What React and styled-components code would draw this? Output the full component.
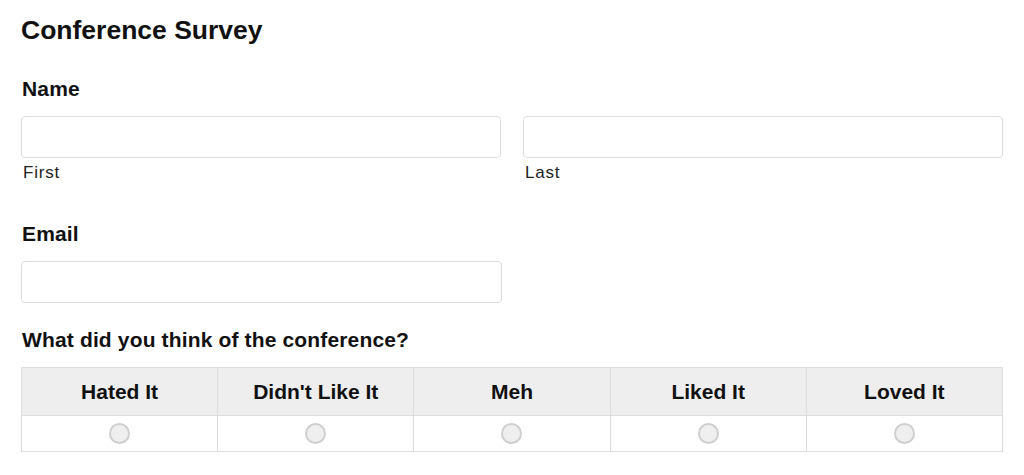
import React from "react";
import styled, { createGlobalStyle } from "styled-components";

const Global = createGlobalStyle`
  html, body { margin: 0; padding: 0; background: #fff; }
  body { font-family: "Liberation Sans", Arial, sans-serif; color: #111; }
  * { box-sizing: border-box; }
`;

const Page = styled.form`
  padding: 14px 21px 20px 21px;
  display: flex;
  flex-direction: column;
`;

const Title = styled.h1`
  margin: 0;
  font-size: 26.5px;
  font-weight: bold;
  line-height: 32px;
  color: #111;
`;

const Section = styled.div`
  margin-top: ${(p) => p.$top}px;
  display: flex;
  flex-direction: column;
`;

const Label = styled.div`
  font-size: 21px;
  letter-spacing: 0.15px;
  font-weight: bold;
  line-height: 24px;
  padding-left: 1px;
`;

const NameRow = styled.div`
  display: grid;
  grid-template-columns: 480px 480px;
  column-gap: 22px;
  margin-top: 15px;
`;

const Field = styled.div`
  display: flex;
  flex-direction: column;
  margin-top: ${(p) => p.$top || 0}px;
`;

const Input = styled.input`
  width: ${(p) => p.$w || "100%"};
  height: 42px;
  border: 1px solid #ddd;
  border-radius: 4px;
  background: #fff;
  padding: 0 10px;
  font-size: 16px;
  font-family: inherit;
  outline: none;
`;

const Sub = styled.div`
  font-size: 17px;
  letter-spacing: 0.8px;
  line-height: 20px;
  margin-top: 5px;
  padding-left: 2px;
  color: #222;
`;

const Table = styled.table`
  margin-top: 15px;
  width: 982px;
  border-collapse: collapse;
  table-layout: fixed;
`;

const Th = styled.th`
  background: #eee;
  border: 1px solid #ddd;
  height: 48px;
  font-size: 21px;
  font-weight: bold;
  text-align: center;
  color: #111;
`;

const Td = styled.td`
  border: 1px solid #ddd;
  height: 36px;
  text-align: center;
  vertical-align: middle;
  padding: 0;
`;

const Radio = styled.input`
  appearance: none;
  -webkit-appearance: none;
  width: 21px;
  height: 21px;
  margin: 0 auto;
  border-radius: 50%;
  border: 2px solid #cfcfcf;
  background: #efefef;
  display: block;
`;

const options = ["Hated It", "Didn't Like It", "Meh", "Liked It", "Loved It"];

export default function App() {
  return (
    <>
      <Global />
      <Page>
        <Title>Conference Survey</Title>
        <Section $top={31}>
          <Label>Name</Label>
          <NameRow>
            <Field>
              <Input type="text" />
              <Sub>First</Sub>
            </Field>
            <Field>
              <Input type="text" />
              <Sub>Last</Sub>
            </Field>
          </NameRow>
        </Section>
        <Section $top={39}>
          <Label>Email</Label>
          <Field $top={15}>
            <Input type="email" $w="481px" />
          </Field>
        </Section>
        <Section $top={25}>
          <Label>What did you think of the conference?</Label>
          <Table>
            <thead>
              <tr>
                {options.map((o) => (
                  <Th key={o}>{o}</Th>
                ))}
              </tr>
            </thead>
            <tbody>
              <tr>
                {options.map((o) => (
                  <Td key={o}>
                    <Radio type="radio" name="rating" value={o} />
                  </Td>
                ))}
              </tr>
            </tbody>
          </Table>
        </Section>
      </Page>
    </>
  );
}
